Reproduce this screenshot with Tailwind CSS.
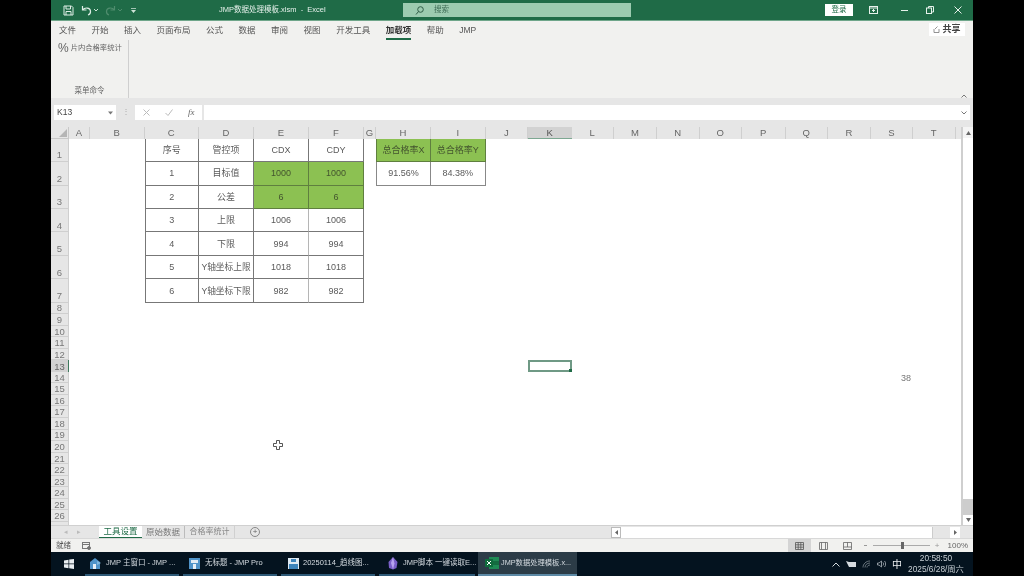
<!DOCTYPE html>
<html lang="zh-CN">
<head>
    <meta charset="UTF-8">
    <title>JMP数据处理模板.xlsm - Excel</title>
    <script src="https://cdn.jsdelivr.net/npm/@tailwindcss/browser@4"></script>
</head>
<body class="bg-black overflow-hidden">
<div class="w-[1024px] h-[576px] bg-black flex justify-center overflow-hidden [font-family:'Liberation_Sans','Noto_Sans_CJK_SC',sans-serif] blur-[0.4px]">
<div class="w-[922px] h-[576px] flex flex-col bg-white text-[#5a5a5a]">

    <!-- title bar -->
    <div class="h-[21px] shrink-0 bg-[#1f6b47] border-b border-[#6fa68a] flex items-center text-white relative">
        <svg class="ml-[12px] w-[11px] h-[11px]" viewBox="0 0 11 11" fill="none" stroke="#dfeee6" stroke-width="1"><path d="M1 1h7.5L10 2.5V10H1z"/><path d="M3 1v3h4.500V1M3 10V6.500h5V10"/></svg>
        <svg class="ml-[7px] w-[11px] h-[11px]" viewBox="0 0 11 11" fill="none" stroke="#dfeee6" stroke-width="1.200"><path d="M1.500 1v4h4M1.500 5C4 2 9 2.500 9.500 6c.2 1.800-1 3.500-2.500 4"/></svg>
        <svg class="ml-[1px] w-[6px] h-[6px]" viewBox="0 0 6 6" fill="none" stroke="#cfe3d8"><path d="M1 2l2 2 2-2"/></svg>
        <svg class="ml-[6px] w-[11px] h-[11px]" viewBox="0 0 11 11" fill="none" stroke="#4f8c6d" stroke-width="1.200"><path d="M9.500 1v4h-4M9.500 5C7 2 2 2.500 1.500 6c-.2 1.800 1 3.500 2.500 4"/></svg>
        <svg class="ml-[1px] w-[6px] h-[6px]" viewBox="0 0 6 6" fill="none" stroke="#4f8c6d"><path d="M1 2l2 2 2-2"/></svg>
        <svg class="ml-[7px] w-[7px] h-[7px]" viewBox="0 0 7 7" fill="#cfe3d8"><path d="M1 1h5v.8H1zM1 3h5L3.500 6z"/></svg>
        <span class="absolute left-[168px] text-[7.500px] text-[#e6f1eb] whitespace-pre">JMP数据处理模板.xlsm  -  Excel</span>
        <div class="absolute left-[352px] top-[3px] w-[228px] h-[14px] bg-[#9ccbb0] flex items-center text-[#3d6b55] text-[7.500px]">
            <svg class="ml-[12px] w-[9px] h-[9px]" viewBox="0 0 9 9" fill="none" stroke="#2f5c46"><circle cx="5.500" cy="3.500" r="2.800"/><path d="M3.500 5.500L1 8.500"/></svg>
            <span class="ml-[10px]">搜索</span>
        </div>
        <div class="absolute left-[774px] top-[4px] w-[28px] h-[12px] bg-white text-[#1f6b47] text-[7.500px] flex items-center justify-center">登录</div>
        <svg class="absolute left-[818px] top-[6px] w-[9px] h-[8px]" viewBox="0 0 9 8" fill="none" stroke="#e6f1eb"><rect x=".5" y=".5" width="8" height="7"/><path d="M1 2h7M4.500 3v3M3 4.500h3"/></svg>
        <div class="absolute left-[850px] top-[10px] w-[7px] h-px bg-[#e6f1eb]"></div>
        <svg class="absolute left-[875px] top-[6px] w-[8px] h-[8px]" viewBox="0 0 8 8" fill="none" stroke="#e6f1eb"><rect x=".5" y="2" width="5" height="5.500"/><path d="M2.500 2V.5h5V6H6"/></svg>
        <svg class="absolute left-[903px] top-[6px] w-[8px] h-[8px]" viewBox="0 0 8 8" stroke="#e6f1eb"><path d="M.5.5l7 7M7.500.5l-7 7"/></svg>
    </div>

    <!-- ribbon -->
    <div class="h-[77px] shrink-0 bg-[#f1f1ef] relative">
        <div class="h-[19px] flex items-center pl-[8px] gap-[15.500px] text-[8.500px] text-[#555]">
            <span>文件</span><span>开始</span><span>插入</span><span>页面布局</span><span>公式</span><span>数据</span><span>审阅</span><span>视图</span><span>开发工具</span>
            <span class="relative font-bold text-[#333]">加载项<span class="absolute left-0 right-0 top-[13.500px] h-[2px] bg-[#1f6b47]"></span></span>
            <span>帮助</span><span>JMP</span>
        </div>
        <div class="absolute left-[878px] top-[2px] w-[36px] h-[13px] bg-white flex items-center justify-center gap-[2px] text-[9px] font-bold text-[#444]">
            <svg class="w-[7px] h-[7px]" viewBox="0 0 7 7" fill="none" stroke="#777" stroke-width=".8"><path d="M1 3v3.500h5V3M2 3l2.500-2.500"/></svg>共享
        </div>
        <div class="flex h-[58px]">
            <div class="w-[78px] flex flex-col items-center justify-between pb-[1px] border-r border-[#cfcfcf]">
                <div class="w-full flex items-center pl-[7px] gap-[2px] mt-[2px]"><span class="text-[12px] leading-[12px] text-[#666]">%</span><span class="text-[7.300px] whitespace-nowrap text-[#666]">片内合格率统计</span></div>
                <span class="text-[7.500px] text-[#666] leading-[10px] mb-[1px]">菜单命令</span>
            </div>
        </div>
        <svg class="absolute left-[910px] top-[73px] w-[6px] h-[4px]" viewBox="0 0 6 4" fill="none" stroke="#777"><path d="M.5 3.500L3 1l2.500 2.500"/></svg>
    </div>

    <!-- formula bar -->
    <div class="h-[29px] shrink-0 bg-[#e6e6e6] flex items-start pt-[7px] pl-[3px] pr-[3px]">
        <div class="w-[62px] h-[15px] bg-white flex items-center justify-between px-[3px] text-[8.500px] text-[#444]">K13<svg class="w-[5px] h-[4px]" viewBox="0 0 5 4" fill="#777"><path d="M0 .5h5L2.500 3.500z"/></svg></div>
        <div class="w-[19px] flex justify-center text-[8px] text-[#aaa] leading-[14px]">⋮</div>
        <div class="w-[67px] h-[15px] bg-white flex items-center pl-[8px] gap-[15px]">
            <svg class="w-[7px] h-[7px]" viewBox="0 0 7 7" stroke="#bbb"><path d="M.5.5l6 6M6.500.5l-6 6"/></svg>
            <svg class="w-[8px] h-[7px]" viewBox="0 0 8 7" fill="none" stroke="#bbb"><path d="M.5 4l2.500 2.500L7.500.5"/></svg>
            <span class="text-[9px] italic text-[#666] [font-family:'Liberation_Serif',serif]">fx</span>
        </div>
        <div class="ml-[2px] flex-1 h-[15px] bg-white flex items-center justify-end pr-[3px]">
            <svg class="w-[6px] h-[4px]" viewBox="0 0 6 4" fill="none" stroke="#777"><path d="M.5.500L3 3l2.500-2.500"/></svg>
        </div>
    </div>

    <!-- sheet -->
    <div class="h-[398px] shrink-0 flex">
        <div class="w-[910px] grid grid-cols-[18px_21px_54.500px_54.500px_55px_55px_55px_12px_55px_54.500px_42.500px_43.500px_42.500px_43px_42.500px_42.500px_43.500px_42.500px_43px_42px_42.500px_1fr] grid-rows-[11.500px_23px_24px_23px_23.500px_23.500px_23.500px_23.500px_repeat(19,11.550px)_1fr] text-[9px] relative">
            <!-- column headers -->
            <div class="col-start-1 row-start-1 bg-[#e6e6e6] border-r border-b border-[#c8c8c8] flex items-end justify-end p-[1px]"><svg class="w-[8px] h-[8px]" viewBox="0 0 8 8" fill="#b5b5b5"><path d="M8 0v8H0z"/></svg></div>
            <div class="col-start-2 row-start-1 bg-[#e6e6e6] border-r border-[#cfcfcf] flex items-center justify-center text-[#666] pt-[1px] text-[9.500px]">A</div>
            <div class="col-start-3 row-start-1 bg-[#e6e6e6] border-r border-[#cfcfcf] flex items-center justify-center text-[#666] pt-[1px] text-[9.500px]">B</div>
            <div class="col-start-4 row-start-1 bg-[#e6e6e6] border-r border-[#cfcfcf] flex items-center justify-center text-[#666] pt-[1px] text-[9.500px]">C</div>
            <div class="col-start-5 row-start-1 bg-[#e6e6e6] border-r border-[#cfcfcf] flex items-center justify-center text-[#666] pt-[1px] text-[9.500px]">D</div>
            <div class="col-start-6 row-start-1 bg-[#e6e6e6] border-r border-[#cfcfcf] flex items-center justify-center text-[#666] pt-[1px] text-[9.500px]">E</div>
            <div class="col-start-7 row-start-1 bg-[#e6e6e6] border-r border-[#cfcfcf] flex items-center justify-center text-[#666] pt-[1px] text-[9.500px]">F</div>
            <div class="col-start-8 row-start-1 bg-[#e6e6e6] border-r border-[#cfcfcf] flex items-center justify-center text-[#666] pt-[1px] text-[9.500px]">G</div>
            <div class="col-start-9 row-start-1 bg-[#e6e6e6] border-r border-[#cfcfcf] flex items-center justify-center text-[#666] pt-[1px] text-[9.500px]">H</div>
            <div class="col-start-10 row-start-1 bg-[#e6e6e6] border-r border-[#cfcfcf] flex items-center justify-center text-[#666] pt-[1px] text-[9.500px]">I</div>
            <div class="col-start-11 row-start-1 bg-[#e6e6e6] border-r border-[#cfcfcf] flex items-center justify-center text-[#666] pt-[1px] text-[9.500px]">J</div>
            <div class="col-start-12 row-start-1 bg-[#d2d2d2] border-b border-[#7da892] flex items-center justify-center text-[#555] pt-[1px] text-[9.500px]">K</div>
            <div class="col-start-13 row-start-1 bg-[#e6e6e6] border-r border-[#cfcfcf] flex items-center justify-center text-[#666] pt-[1px] text-[9.500px]">L</div>
            <div class="col-start-14 row-start-1 bg-[#e6e6e6] border-r border-[#cfcfcf] flex items-center justify-center text-[#666] pt-[1px] text-[9.500px]">M</div>
            <div class="col-start-15 row-start-1 bg-[#e6e6e6] border-r border-[#cfcfcf] flex items-center justify-center text-[#666] pt-[1px] text-[9.500px]">N</div>
            <div class="col-start-16 row-start-1 bg-[#e6e6e6] border-r border-[#cfcfcf] flex items-center justify-center text-[#666] pt-[1px] text-[9.500px]">O</div>
            <div class="col-start-17 row-start-1 bg-[#e6e6e6] border-r border-[#cfcfcf] flex items-center justify-center text-[#666] pt-[1px] text-[9.500px]">P</div>
            <div class="col-start-18 row-start-1 bg-[#e6e6e6] border-r border-[#cfcfcf] flex items-center justify-center text-[#666] pt-[1px] text-[9.500px]">Q</div>
            <div class="col-start-19 row-start-1 bg-[#e6e6e6] border-r border-[#cfcfcf] flex items-center justify-center text-[#666] pt-[1px] text-[9.500px]">R</div>
            <div class="col-start-20 row-start-1 bg-[#e6e6e6] border-r border-[#cfcfcf] flex items-center justify-center text-[#666] pt-[1px] text-[9.500px]">S</div>
            <div class="col-start-21 row-start-1 bg-[#e6e6e6] border-r border-[#cfcfcf] flex items-center justify-center text-[#666] pt-[1px] text-[9.500px]">T</div>
            <div class="col-start-22 row-start-1 bg-[#e6e6e6]"></div>

            <!-- row headers -->
            <div class="col-start-1 row-start-2 bg-[#e6e6e6] border-r border-b border-[#cfcfcf] flex items-end justify-center text-[#777] text-[9.500px] leading-[10px] pb-[0.500px]">1</div>
            <div class="col-start-1 row-start-3 bg-[#e6e6e6] border-r border-b border-[#cfcfcf] flex items-end justify-center text-[#777] text-[9.500px] leading-[10px] pb-[0.500px]">2</div>
            <div class="col-start-1 row-start-4 bg-[#e6e6e6] border-r border-b border-[#cfcfcf] flex items-end justify-center text-[#777] text-[9.500px] leading-[10px] pb-[0.500px]">3</div>
            <div class="col-start-1 row-start-5 bg-[#e6e6e6] border-r border-b border-[#cfcfcf] flex items-end justify-center text-[#777] text-[9.500px] leading-[10px] pb-[0.500px]">4</div>
            <div class="col-start-1 row-start-6 bg-[#e6e6e6] border-r border-b border-[#cfcfcf] flex items-end justify-center text-[#777] text-[9.500px] leading-[10px] pb-[0.500px]">5</div>
            <div class="col-start-1 row-start-7 bg-[#e6e6e6] border-r border-b border-[#cfcfcf] flex items-end justify-center text-[#777] text-[9.500px] leading-[10px] pb-[0.500px]">6</div>
            <div class="col-start-1 row-start-8 bg-[#e6e6e6] border-r border-b border-[#cfcfcf] flex items-end justify-center text-[#777] text-[9.500px] leading-[10px] pb-[0.500px]">7</div>
            <div class="col-start-1 row-start-9 bg-[#e6e6e6] border-r border-b border-[#cfcfcf] flex items-center justify-center text-[#777] text-[9.500px] pt-[1.500px]">8</div>
            <div class="col-start-1 row-start-10 bg-[#e6e6e6] border-r border-b border-[#cfcfcf] flex items-center justify-center text-[#777] text-[9.500px] pt-[1.500px]">9</div>
            <div class="col-start-1 row-start-11 bg-[#e6e6e6] border-r border-b border-[#cfcfcf] flex items-center justify-center text-[#777] text-[9.500px] pt-[1.500px]">10</div>
            <div class="col-start-1 row-start-12 bg-[#e6e6e6] border-r border-b border-[#cfcfcf] flex items-center justify-center text-[#777] text-[9.500px] pt-[1.500px]">11</div>
            <div class="col-start-1 row-start-13 bg-[#e6e6e6] border-r border-b border-[#cfcfcf] flex items-center justify-center text-[#777] text-[9.500px] pt-[1.500px]">12</div>
            <div class="col-start-1 row-start-14 bg-[#d2d2d2] border-r border-[#3f7a5e] flex items-center justify-center text-[#666] text-[9.500px] pt-[1.500px]">13</div>
            <div class="col-start-1 row-start-15 bg-[#e6e6e6] border-r border-b border-[#cfcfcf] flex items-center justify-center text-[#777] text-[9.500px] pt-[1.500px]">14</div>
            <div class="col-start-1 row-start-16 bg-[#e6e6e6] border-r border-b border-[#cfcfcf] flex items-center justify-center text-[#777] text-[9.500px] pt-[1.500px]">15</div>
            <div class="col-start-1 row-start-17 bg-[#e6e6e6] border-r border-b border-[#cfcfcf] flex items-center justify-center text-[#777] text-[9.500px] pt-[1.500px]">16</div>
            <div class="col-start-1 row-start-18 bg-[#e6e6e6] border-r border-b border-[#cfcfcf] flex items-center justify-center text-[#777] text-[9.500px] pt-[1.500px]">17</div>
            <div class="col-start-1 row-start-19 bg-[#e6e6e6] border-r border-b border-[#cfcfcf] flex items-center justify-center text-[#777] text-[9.500px] pt-[1.500px]">18</div>
            <div class="col-start-1 row-start-20 bg-[#e6e6e6] border-r border-b border-[#cfcfcf] flex items-center justify-center text-[#777] text-[9.500px] pt-[1.500px]">19</div>
            <div class="col-start-1 row-start-21 bg-[#e6e6e6] border-r border-b border-[#cfcfcf] flex items-center justify-center text-[#777] text-[9.500px] pt-[1.500px]">20</div>
            <div class="col-start-1 row-start-22 bg-[#e6e6e6] border-r border-b border-[#cfcfcf] flex items-center justify-center text-[#777] text-[9.500px] pt-[1.500px]">21</div>
            <div class="col-start-1 row-start-23 bg-[#e6e6e6] border-r border-b border-[#cfcfcf] flex items-center justify-center text-[#777] text-[9.500px] pt-[1.500px]">22</div>
            <div class="col-start-1 row-start-24 bg-[#e6e6e6] border-r border-b border-[#cfcfcf] flex items-center justify-center text-[#777] text-[9.500px] pt-[1.500px]">23</div>
            <div class="col-start-1 row-start-25 bg-[#e6e6e6] border-r border-b border-[#cfcfcf] flex items-center justify-center text-[#777] text-[9.500px] pt-[1.500px]">24</div>
            <div class="col-start-1 row-start-26 bg-[#e6e6e6] border-r border-b border-[#cfcfcf] flex items-center justify-center text-[#777] text-[9.500px] pt-[1.500px]">25</div>
            <div class="col-start-1 row-start-27 bg-[#e6e6e6] border-r border-b border-[#cfcfcf] flex items-center justify-center text-[#777] text-[9.500px] pt-[1.500px]">26</div>
            <div class="col-start-1 row-start-28 bg-[#e6e6e6] border-r border-[#cfcfcf]"></div>

            <!-- left table -->
            <div class="col-start-4 row-start-2 border-l border-r border-b border-[#777] flex items-center justify-center pt-[2px]">序号</div>
            <div class="col-start-5 row-start-2 border-r border-b border-[#777] flex items-center justify-center pt-[2px]">管控项</div>
            <div class="col-start-6 row-start-2 border-r border-b border-[#777] flex items-center justify-center pt-[2px]">CDX</div>
            <div class="col-start-7 row-start-2 border-r border-b border-[#777] flex items-center justify-center pt-[2px]">CDY</div>
            <div class="col-start-4 row-start-3 border-l border-r border-b border-[#777] flex items-center justify-center pt-[2px]">1</div>
            <div class="col-start-5 row-start-3 border-r border-b border-[#777] flex items-center justify-center pt-[2px]">目标值</div>
            <div class="col-start-6 row-start-3 bg-[#8cc152] border-r border-b border-[#5f7f3f] flex items-center justify-center text-[#44552f] pt-[2px]">1000</div>
            <div class="col-start-7 row-start-3 bg-[#8cc152] border-r border-b border-[#5f7f3f] flex items-center justify-center text-[#44552f] pt-[2px]">1000</div>
            <div class="col-start-4 row-start-4 border-l border-r border-b border-[#777] flex items-center justify-center pt-[2px]">2</div>
            <div class="col-start-5 row-start-4 border-r border-b border-[#777] flex items-center justify-center pt-[2px]">公差</div>
            <div class="col-start-6 row-start-4 bg-[#8cc152] border-r border-b border-[#5f7f3f] flex items-center justify-center text-[#44552f] pt-[2px]">6</div>
            <div class="col-start-7 row-start-4 bg-[#8cc152] border-r border-b border-[#5f7f3f] flex items-center justify-center text-[#44552f] pt-[2px]">6</div>
            <div class="col-start-4 row-start-5 border-l border-r border-b border-[#777] flex items-center justify-center pt-[2px]">3</div>
            <div class="col-start-5 row-start-5 border-r border-b border-[#777] flex items-center justify-center pt-[2px]">上限</div>
            <div class="col-start-6 row-start-5 border-r border-r-[#b5b5b5] border-b border-b-[#777] flex items-center justify-center pt-[2px]">1006</div>
            <div class="col-start-7 row-start-5 border-r border-b border-[#777] flex items-center justify-center pt-[2px]">1006</div>
            <div class="col-start-4 row-start-6 border-l border-r border-b border-[#777] flex items-center justify-center pt-[2px]">4</div>
            <div class="col-start-5 row-start-6 border-r border-b border-[#777] flex items-center justify-center pt-[2px]">下限</div>
            <div class="col-start-6 row-start-6 border-r border-r-[#b5b5b5] border-b border-b-[#777] flex items-center justify-center pt-[2px]">994</div>
            <div class="col-start-7 row-start-6 border-r border-b border-[#777] flex items-center justify-center pt-[2px]">994</div>
            <div class="col-start-4 row-start-7 border-l border-r border-b border-[#777] flex items-center justify-center pt-[2px]">5</div>
            <div class="col-start-5 row-start-7 border-r border-b border-[#777] flex items-center justify-center whitespace-nowrap pt-[2px] text-[8.700px]">Y轴坐标上限</div>
            <div class="col-start-6 row-start-7 border-r border-r-[#b5b5b5] border-b border-b-[#777] flex items-center justify-center pt-[2px]">1018</div>
            <div class="col-start-7 row-start-7 border-r border-b border-[#777] flex items-center justify-center pt-[2px]">1018</div>
            <div class="col-start-4 row-start-8 border-l border-r border-b border-[#777] flex items-center justify-center pt-[2px]">6</div>
            <div class="col-start-5 row-start-8 border-r border-b border-[#777] flex items-center justify-center whitespace-nowrap pt-[2px] text-[8.700px]">Y轴坐标下限</div>
            <div class="col-start-6 row-start-8 border-r border-r-[#b5b5b5] border-b border-b-[#777] flex items-center justify-center pt-[2px]">982</div>
            <div class="col-start-7 row-start-8 border-r border-b border-[#777] flex items-center justify-center pt-[2px]">982</div>

            <!-- right table -->
            <div class="col-start-9 row-start-2 bg-[#8cc152] border-l border-r border-b border-[#5f7f3f] flex items-center justify-center text-[#44552f] whitespace-nowrap pt-[2px]">总合格率X</div>
            <div class="col-start-10 row-start-2 bg-[#8cc152] border-r border-b border-[#5f7f3f] flex items-center justify-center text-[#44552f] whitespace-nowrap pt-[2px]">总合格率Y</div>
            <div class="col-start-9 row-start-3 border-l border-r border-b border-[#888] flex items-center justify-center pt-[2px]">91.56%</div>
            <div class="col-start-10 row-start-3 border-r border-b border-[#888] flex items-center justify-center pt-[2px]">84.38%</div>

            <!-- active cell and stray value -->
            <div class="col-start-12 row-start-14 border-2 border-[#6f9985] relative"><span class="absolute -right-[2px] -bottom-[2px] w-[3px] h-[3px] bg-[#1f6b47]"></span></div>
            <div class="col-start-20 row-start-15 flex items-center justify-end pr-[2px] text-[#777] pt-[1.500px]">38</div>

            <!-- mouse cursor -->
            <svg class="absolute left-[222px] top-[313px] w-[10px] h-[10px]" viewBox="0 0 10 10" fill="#fff" stroke="#444" stroke-width=".9"><path d="M3.500.5h3v3h3v3h-3v3h-3v-3h-3v-3h3z"/></svg>
        </div>

        <!-- vertical scrollbar -->
        <div class="flex-1 bg-white border-l-2 border-[#cfcfcf] flex flex-col">
            <div class="h-[11px] bg-[#f4f4f4] flex items-center justify-center"><svg class="w-[5px] h-[4px]" viewBox="0 0 5 4" fill="#666"><path d="M2.500 0L5 4H0z"/></svg></div>
            <div class="flex-1 bg-white"></div>
            <div class="h-[16px] bg-[#cdcdcd]"></div>
            <div class="h-[10px] bg-white flex items-center justify-center"><svg class="w-[5px] h-[4px]" viewBox="0 0 5 4" fill="#666"><path d="M0 0h5L2.500 4z"/></svg></div>
        </div>
    </div>

    <!-- sheet tabs -->
    <div class="h-[13px] shrink-0 bg-[#e6e6e6] border-t border-[#d0d0d0] flex items-stretch text-[8.500px]">
        <div class="w-[48px] flex items-center pl-[13px] gap-[9px] text-[#bbb] text-[7px]"><span>◂</span><span>▸</span></div>
        <div class="w-[43px] bg-white border-b border-[#1f6b47] flex items-center justify-center text-[#1f6b47]">工具设置</div>
        <div class="w-[43px] border-r border-[#bbb] flex items-center justify-center text-[#777]">原始数据</div>
        <div class="w-[50px] border-r border-[#d0d0d0] flex items-center justify-center text-[#888] text-[8px]">合格率统计</div>
        <div class="ml-[14px] w-[12px] flex items-center justify-center"><span class="w-[10px] h-[10px] rounded-full border border-[#888] flex items-center justify-center text-[8px] leading-none text-[#666]">+</span></div>
        <div class="ml-auto w-[362px] flex items-center">
            <div class="w-[10px] h-[11px] bg-white border border-[#bbb] flex items-center justify-center"><svg class="w-[3px] h-[5px]" viewBox="0 0 3 5" fill="#666"><path d="M3 0v5L0 2.500z"/></svg></div>
            <div class="w-[312px] h-[11px] bg-white border-r border-[#ccc]"></div>
            <div class="w-[17px]"></div>
            <div class="w-[10px] h-[11px] bg-white flex items-center justify-center"><svg class="w-[3px] h-[5px]" viewBox="0 0 3 5" fill="#666"><path d="M0 0v5L3 2.500z"/></svg></div>
        </div>
    </div>

    <!-- status bar -->
    <div class="h-[14px] shrink-0 bg-[#f1f1ef] border-t border-[#d8d8d8] flex items-center pl-[5px] text-[7.500px] text-[#555]">
        <span>就绪</span>
        <svg class="ml-[11px] w-[9px] h-[8px]" viewBox="0 0 9 8" fill="none" stroke="#777"><rect x=".5" y=".5" width="7" height="6"/><path d="M.5 2.500h7"/><circle cx="7" cy="6" r="1.500" fill="#777"/></svg>
        <div class="ml-auto w-[23px] h-full bg-[#d4d4d4] flex items-center justify-center"><svg class="w-[9px] h-[8px]" viewBox="0 0 9 8" fill="none" stroke="#555" stroke-width=".8"><path d="M.5.500h8v7h-8zM.5 2.800h8M.5 5.200h8M3.200.5v7M5.800.5v7"/></svg></div>
        <div class="w-[25px] flex justify-center"><svg class="w-[9px] h-[8px]" viewBox="0 0 9 8" fill="none" stroke="#666" stroke-width=".8"><path d="M.5.500h8v7h-8zM2.500.5v7M6.500.5v7"/></svg></div>
        <div class="w-[24px] flex justify-center"><svg class="w-[9px] h-[8px]" viewBox="0 0 9 8" fill="none" stroke="#666" stroke-width=".8"><path d="M.5.500h8v7h-8zM.5 5h8M4.500.5V5"/></svg></div>
        <div class="ml-[4px] w-[76px] flex items-center gap-[2px] text-[#999]">
            <span class="w-[4px] h-px bg-[#999]"></span>
            <div class="ml-[4px] w-[61px] h-px bg-[#aaa] relative"><span class="absolute left-[28px] -top-[3px] w-[3px] h-[7px] bg-[#666]"></span></div>
            <span class="ml-[3px] text-[8px] leading-none">+</span>
        </div>
        <span class="ml-[8px] mr-[5px] text-[8px] text-[#666]">100%</span>
    </div>

    <!-- taskbar -->
    <div class="h-[24px] shrink-0 bg-[#04131f] flex items-stretch text-[7.500px] text-[#d5dbe0]">
        <div class="w-[34px] flex items-center justify-center pl-[1px]"><svg class="w-[10px] h-[10px]" viewBox="0 0 10 10" fill="#e8eef2"><path d="M0 1.400l4.500-.7v3.900H0zM5.200.6L10 0v4.600H5.200zM0 5.300h4.500v3.900L0 8.600zM5.200 5.300H10V10l-4.800-.7z"/></svg></div>
        <div class="w-[94px] border-b-2 border-[#2e5a78] flex items-center gap-[4px] pl-[4px] whitespace-nowrap"><svg class="w-[13px] h-[13px] shrink-0" viewBox="0 0 13 13"><path d="M1 12V5l5-4 5 4v7z" fill="#4f93c8"/><path d="M4 12V7h3v5z" fill="#e6eef5"/><path d="M8 4l4 2-4 2z" fill="#7fb6dc"/></svg>JMP 主窗口 - JMP ...</div>
        <div class="ml-[4px] w-[94px] border-b-2 border-[#2e5a78] flex items-center gap-[4px] pl-[5px] whitespace-nowrap"><svg class="w-[13px] h-[13px] shrink-0" viewBox="0 0 13 13"><rect x="1" y="1" width="11" height="11" fill="#4f93c8"/><path d="M3 3h7v3H3z" fill="#dfeaf3"/><path d="M5 7h3v5H5z" fill="#e6eef5"/></svg>无标题 - JMP Pro</div>
        <div class="ml-[4px] w-[94px] border-b-2 border-[#2e5a78] flex items-center gap-[3px] pl-[6px] whitespace-nowrap"><svg class="w-[13px] h-[13px] shrink-0" viewBox="0 0 13 13"><rect x="1" y="1" width="11" height="11" fill="#dfeaf3"/><path d="M2 7h9v5H2z" fill="#3d84bb"/><path d="M4 2h5v3H4z" fill="#3d84bb"/></svg>20250114_趋线图...</div>
        <div class="ml-[4px] w-[96px] border-b-2 border-[#2e5a78] flex items-center gap-[4px] pl-[8px] whitespace-nowrap"><svg class="w-[12px] h-[14px] shrink-0" viewBox="0 0 12 14"><path d="M6 1l4.500 5-1 6L6 13.500 2 12 1.500 6z" fill="#7a5fc8"/><path d="M6 1L4 7l2 6.500 1.500-6z" fill="#b7a3ee"/></svg>JMP脚本 一键读取E...</div>
        <div class="ml-[3px] w-[99px] bg-[#2c3c47] border-b-2 border-[#5d8aa6] flex items-center gap-[2px] pl-[7px] whitespace-nowrap text-[7.300px]"><svg class="w-[14px] h-[12px] shrink-0" viewBox="0 0 14 12"><rect x="4" y="0" width="10" height="12" fill="#1f8a55"/><rect x="4" y="4" width="10" height="4" fill="#146b40"/><rect x="0" y="2" width="8" height="8" fill="#0f6b3c"/><path d="M2 4l4 4M6 4L2 8" stroke="#fff"/></svg>JMP数据处理模板.x...</div>
        <div class="ml-auto flex items-center gap-[6px]">
            <svg class="w-[8px] h-[5px]" viewBox="0 0 8 5" fill="none" stroke="#d5dbe0"><path d="M.5 4.500L4 1l3.500 3.500"/></svg>
            <svg class="w-[10px] h-[7px]" viewBox="0 0 10 7"><path d="M0 0l3 1h7v5H3z" fill="#d5dbe0"/></svg>
            <svg class="w-[9px] h-[8px]" viewBox="0 0 9 8" fill="none" stroke="#7f8a92" stroke-width=".8"><path d="M1 7.500C1 4 4 1 8 1M3 7.500C3 5 5 3 8 3M5 7.500C5 6 6.500 5 8 5"/></svg>
            <svg class="w-[9px] h-[8px]" viewBox="0 0 9 8" fill="none" stroke="#aeb6bc" stroke-width=".8"><path d="M.5 3v2h1.500L4.500 7V1L2 3zM6 2.500c.8.800.8 2.200 0 3M7.500 1c1.500 1.500 1.500 4.500 0 6"/></svg>
            <span class="text-[10px] text-[#eef1f3]">中</span>
            <div class="ml-[-3px] mr-[6px] w-[62px] flex flex-col items-center leading-[11px] text-[8.300px] text-[#c8cfd4] whitespace-nowrap"><span>20:58:50</span><span>2025/6/28/周六</span></div>
        </div>
    </div>

</div>
</div>
</body>
</html>
